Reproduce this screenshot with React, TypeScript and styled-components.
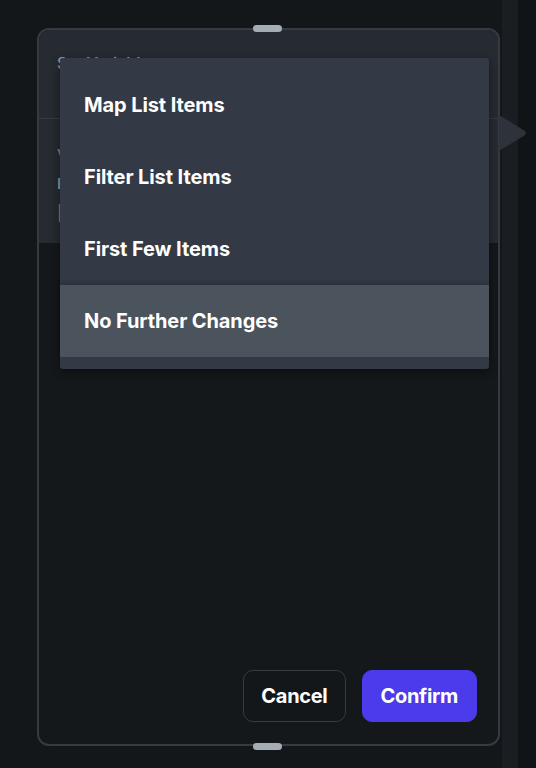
import styled, { createGlobalStyle } from "styled-components";

const MENU_ITEMS: string[] = [
    "Map List Items",
    "Filter List Items",
    "First Few Items",
    "No Further Changes",
]
const ACTIVE_ITEM: number = 3

const GlobalStyle = createGlobalStyle`
    html, body {
        margin: 0;
        padding: 0;
        background: #14171a;
    }
    * {
        box-sizing: border-box;
    }
`
const StyledPage = styled.div`
    display: flex;
    width: 536px;
    height: 768px;
    font-family: Inter, "Noto Sans", sans-serif;
    overflow: hidden;
`
const StyledMain = styled.div`
    flex: 1;
    padding: 28px 2px 0 37px;
`
const StyledSideStrip = styled.div`
    width: 34px;
    background: linear-gradient(to right, #1a1d21 0, #1a1d21 16px, #111417 16px);
`
const StyledCard = styled.div`
    position: relative;
    display: flex;
    flex-direction: column;
    width: 463px;
    height: 718px;
    border: 2px solid #363b43;
    border-radius: 12px;
    background: #15181b;
`
const StyledHandle = styled.div<{bottom?: boolean}>`
    position: absolute;
    left: 214px;
    ${({bottom}) => bottom ? 'bottom: -6px;' : 'top: -5px;'}
    width: 29px;
    height: 7px;
    border-radius: 4px;
    background: #a4adb5;
    z-index: 5;
`
const StyledArrow = styled.div`
    position: absolute;
    right: -29px;
    top: 85px;
    width: 28px;
    height: 36px;
    background: #2e333b;
    clip-path: polygon(0 0, 92% 44%, 96% 50%, 92% 56%, 0 100%);
`
const StyledHeader = styled.div`
    height: 89px;
    padding: 23px 18px;
    background: #262a31;
    border-bottom: 1px solid #353a42;
    border-radius: 10px 10px 0 0;
`
const StyledTitle = styled.div`
    font-size: 16px;
    font-weight: 600;
    color: #8e959d;
`
const StyledSection = styled.div`
    display: flex;
    flex-direction: column;
    gap: 10px;
    height: 124px;
    padding: 26px 18px;
    background: #262a31;
`
const StyledLabel = styled.div<{tone?: 'muted' | 'error'}>`
    font-size: 15px;
    font-weight: 500;
    color: ${({tone}) => tone === 'error' ? '#c76a45' : tone === 'muted' ? '#9aa1a8' : '#7c838b'};
`
const StyledSpacer = styled.div`
    flex: 1;
`
const StyledFooter = styled.div`
    display: flex;
    justify-content: flex-end;
    gap: 16px;
    padding: 0 21px 22px;
`
const StyledButton = styled.button<{primary?: boolean}>`
    height: 52px;
    padding: 0 ${({primary}) => primary ? 18 : 17}px;
    border-radius: 10px;
    border: 1px solid ${({primary}) => primary ? '#4c3bea' : '#363b43'};
    background: ${({primary}) => primary ? '#4c3bea' : '#14171a'};
    color: #ffffff;
    font-family: inherit;
    font-size: 20px;
    font-weight: 700;
    letter-spacing: -0.3px;
    cursor: pointer;
`
const StyledMenu = styled.div`
    position: absolute;
    left: 21px;
    top: 28px;
    width: 429px;
    padding: 11px 0 12px;
    background: #333a45;
    border-radius: 3px;
    box-shadow: 0 3px 8px rgba(0, 0, 0, 0.45);
    z-index: 4;
`
const StyledMenuItem = styled.div<{active: boolean}>`
    display: flex;
    align-items: center;
    height: 72px;
    padding: 0 24px;
    background: ${({active}) => active ? '#4b535c' : 'transparent'};
    box-shadow: ${({active}) => active ? '0 -3px 4px rgba(0, 0, 0, 0.12)' : 'none'};
    color: #ffffff;
    font-size: 20px;
    font-weight: 700;
    letter-spacing: -0.1px;
`

export default function App() {
    return (
        <>
            <GlobalStyle/>
            <StyledPage>
                <StyledMain>
                    <StyledCard>
                        <StyledHandle/>
                        <StyledArrow/>

                        <StyledHeader>
                            <StyledTitle>Set Variable</StyledTitle>
                        </StyledHeader>

                        <StyledSection>
                            <StyledLabel>Variable</StyledLabel>
                            <StyledLabel tone="muted">List</StyledLabel>
                            <StyledLabel tone="error">|</StyledLabel>
                        </StyledSection>

                        <StyledSpacer/>

                        <StyledFooter>
                            <StyledButton>Cancel</StyledButton>
                            <StyledButton primary>Confirm</StyledButton>
                        </StyledFooter>

                        <StyledMenu>
                            {
                                MENU_ITEMS.map((item, i) => (
                                    <StyledMenuItem key={item} active={i === ACTIVE_ITEM}>
                                        {item}
                                    </StyledMenuItem>
                                ))
                            }
                        </StyledMenu>

                        <StyledHandle bottom/>
                    </StyledCard>
                </StyledMain>
                <StyledSideStrip/>
            </StyledPage>
        </>
    )
}
